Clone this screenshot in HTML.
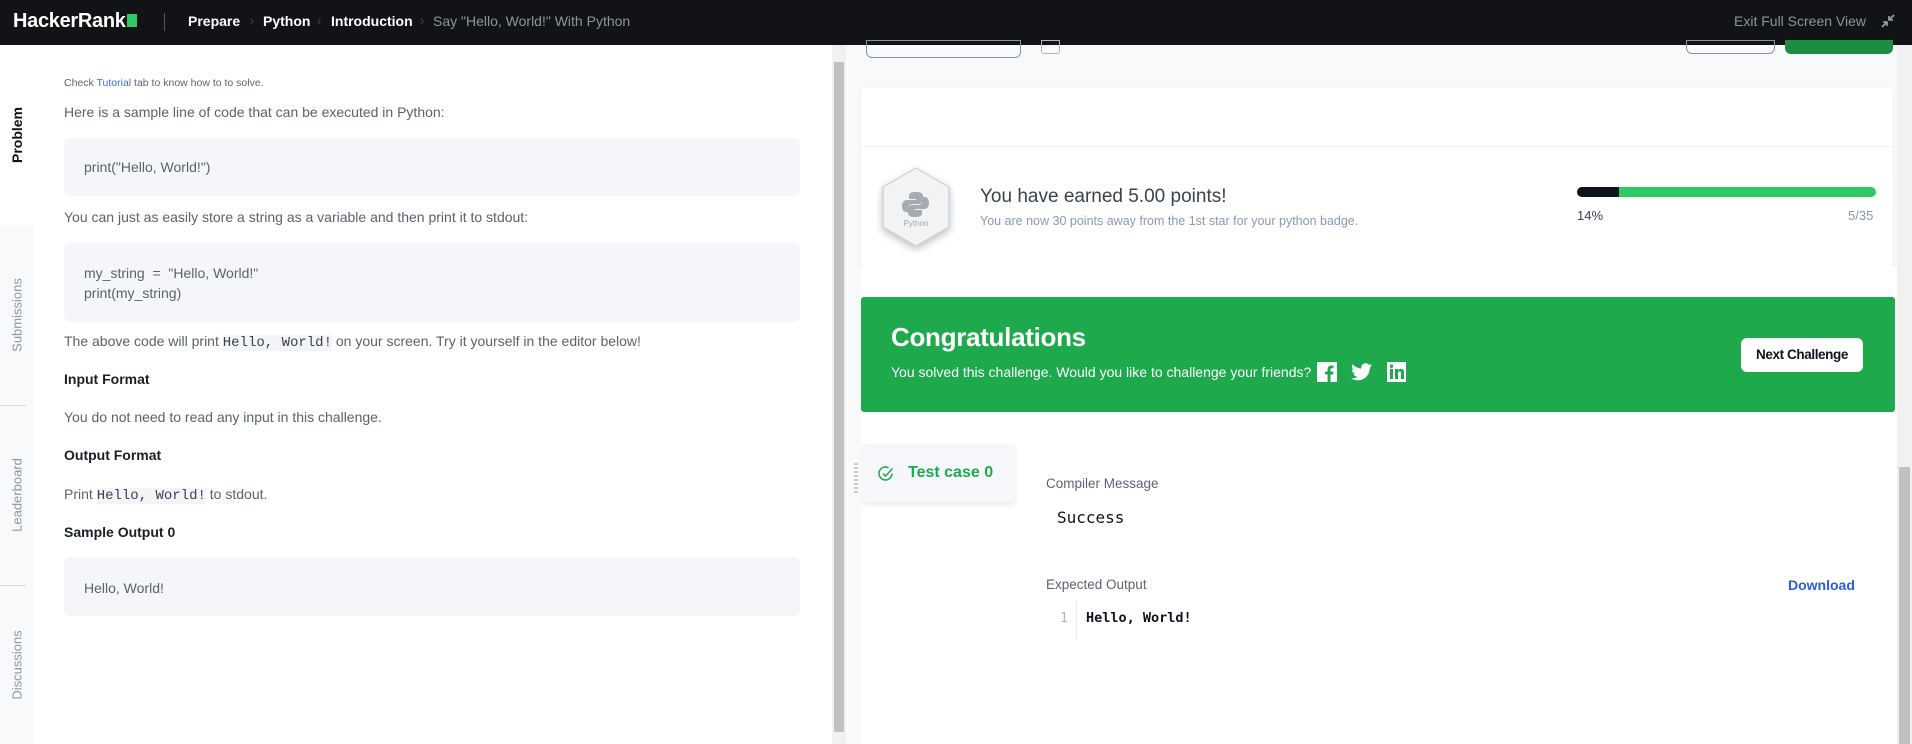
<!DOCTYPE html>
<html><head><meta charset="utf-8"><style>
*{box-sizing:border-box;margin:0;padding:0}
body{width:1912px;height:744px;overflow:hidden;background:#fff;font-family:"Liberation Sans",sans-serif;position:relative;color:#39424e}
.a{position:absolute;white-space:nowrap}
.hdr{left:0;top:0;width:1912px;height:45px;background:#111317}
.side{left:0;top:45px;width:34px;height:699px;background:#f8f9fb}
.tab{position:absolute;left:0;width:34px;}
.vt{position:absolute;left:50%;top:50%;transform:translate(-50%,-50%) rotate(-90deg);font-size:13px;color:#8a96a3;white-space:nowrap}
.box{position:absolute;left:64px;width:736px;background:#f5f6fa;border-radius:6px}
.p{font-size:14px;color:#5a626c}
.h{font-size:14px;font-weight:bold;color:#1a1f27}
code{font-family:"Liberation Mono",monospace;background:#f3f4f8;font-size:14px;color:#39424e}
</style></head><body>
<div class="a hdr"></div>
<div class="a" style="left:13px;top:10px;font-size:20px;font-weight:bold;color:#fff;letter-spacing:-0.3px">HackerRank<span style="display:inline-block;width:10px;height:13px;background:#2ec866;margin-left:1px"></span></div>
<div class="a" style="left:164px;top:13px;width:1px;height:18px;background:#555"></div>
<div class="a" style="left:188px;top:13px;font-size:14px;color:#fff;font-weight:bold">Prepare</div>
<div class="a" style="left:250px;top:13px;font-size:13px;color:#444">›</div>
<div class="a" style="left:263px;top:13px;font-size:14px;color:#fff;font-weight:bold">Python</div>
<div class="a" style="left:317px;top:13px;font-size:13px;color:#444">›</div>
<div class="a" style="left:331px;top:13px;font-size:14px;color:#fff;font-weight:bold">Introduction</div>
<div class="a" style="left:420px;top:13px;font-size:13px;color:#444">›</div>
<div class="a" style="left:433px;top:13px;font-size:14px;color:#8d959c">Say "Hello, World!" With Python</div>
<div class="a" style="left:1734px;top:13px;font-size:14px;color:#8d959c">Exit Full Screen View</div>
<svg class="a" style="left:1880px;top:13px" width="16" height="16" viewBox="0 0 16 16" fill="none" stroke="#9aa3ac" stroke-width="1.6"><path d="M14 2L9 7M9 3v4h4M2 14l5-5M3 9h4v4"/></svg>

<div class="a side"></div>
<div class="tab" style="top:45px;height:180px;background:#fff"><div class="vt" style="color:#0e141e;font-weight:bold;font-size:14px">Problem</div></div>
<div class="tab" style="top:225px;height:180px"><div class="vt">Submissions</div></div>
<div class="a" style="left:0;top:405px;width:26px;height:1px;background:#d5d9de"></div>
<div class="tab" style="top:405px;height:180px"><div class="vt">Leaderboard</div></div>
<div class="a" style="left:0;top:585px;width:26px;height:1px;background:#d5d9de"></div>
<div class="tab" style="top:585px;height:159px"><div class="vt">Discussions</div></div>

<div class="a" style="left:64px;top:77px;font-size:10.5px;color:#5b6470">Check <span style="color:#3b6fd1">Tutorial</span> tab to know how to to solve.</div>
<div class="a p" style="left:64px;top:104px">Here is a sample line of code that can be executed in Python:</div>
<div class="box" style="top:138px;height:58px"></div>
<div class="a p" style="left:84px;top:159px">print("Hello, World!")</div>
<div class="a p" style="left:64px;top:209px">You can just as easily store a string as a variable and then print it to stdout:</div>
<div class="box" style="top:243px;height:79px"></div>
<div class="a p" style="left:84px;top:265px">my_string &nbsp;= &nbsp;"Hello, World!"</div>
<div class="a p" style="left:84px;top:285px">print(my_string)</div>
<div class="a p" style="left:64px;top:333px">The above code will print <code>Hello, World!</code> on your screen. Try it yourself in the editor below!</div>
<div class="a h" style="left:64px;top:371px">Input Format</div>
<div class="a p" style="left:64px;top:409px">You do not need to read any input in this challenge.</div>
<div class="a h" style="left:64px;top:447px">Output Format</div>
<div class="a p" style="left:64px;top:486px">Print <code>Hello, World!</code> to stdout.</div>
<div class="a h" style="left:64px;top:524px">Sample Output 0</div>
<div class="box" style="top:557px;height:59px"></div>
<div class="a p" style="left:84px;top:580px">Hello, World!</div>

<div class="a" style="left:832px;top:45px;width:14px;height:699px;background:#f1f1f1"></div>
<div class="a" style="left:834px;top:62px;width:10px;height:670px;background:#c1c1c1"></div>

<div class="a" style="left:846px;top:45px;width:1051px;height:699px;background:#f8f9fb"></div>
<div class="a" style="left:866px;top:40px;width:155px;height:18px;border:1px solid #8a929b;border-radius:0 0 6px 6px"></div>
<div class="a" style="left:1041px;top:40px;width:19px;height:14px;border:1px solid #b0b6bd;border-radius:0 0 3px 3px"></div>
<div class="a" style="left:1686px;top:40px;width:89px;height:14px;border:1px solid #8a929b;border-radius:0 0 6px 6px"></div>
<div class="a" style="left:1785px;top:40px;width:108px;height:14px;background:#1e8d42;border-radius:0 0 6px 6px"></div>

<div class="a" style="left:861px;top:88px;width:1032px;height:178px;background:#fff;border-radius:4px;box-shadow:0 1px 3px rgba(0,0,0,.08)"></div>
<div class="a" style="left:861px;top:146px;width:1032px;height:1px;background:#f0f1f3"></div>
<svg class="a" style="left:870px;top:160px" width="92" height="96" viewBox="0 0 92 96"><defs><filter id="s"><feDropShadow dx="0" dy="3" stdDeviation="4" flood-opacity=".25"/></filter></defs><polygon points="46,8 79,27 79,67 46,86 13,67 13,27" fill="#f1f3f5" stroke="#c5c9ce" stroke-width="1" filter="url(#s)"/><path d="M45 32c-5 0-6 2-6 4v3h7v1h-9c-3 0-5 2-5 6s2 6 4 6h2v-3c0-3 2-5 5-5h6c2 0 4-2 4-4v-4c0-2-2-4-5-4z M46 57c5 0 6-2 6-4v-3h-7v-1h9c3 0 5-2 5-6s-2-6-4-6h-2v3c0 3-2 5-5 5h-6c-2 0-4 2-4 4v4c0 2 2 4 5 4z" fill="#a4abb3"/><text x="46" y="66" font-size="8" fill="#a4abb3" text-anchor="middle" font-family="Liberation Sans">Python</text></svg>
<div class="a" style="left:980px;top:186px;font-size:19px;color:#39424e">You have earned 5.00 points!</div>
<div class="a" style="left:980px;top:214px;font-size:12.5px;color:#8a9bb0">You are now 30 points away from the 1st star for your python badge.</div>
<div class="a" style="left:1577px;top:187px;width:299px;height:10px;border-radius:5px;background:#2ec866;overflow:hidden"><div style="width:42px;height:10px;background:#0e141e"></div></div>
<div class="a" style="left:1577px;top:208px;font-size:13px;color:#39424e">14%</div>
<div class="a" style="left:1848px;top:208px;font-size:13px;color:#8a96a3">5/35</div>

<div class="a" style="left:861px;top:266px;width:1036px;height:478px;background:#fff"></div>
<div class="a" style="left:861px;top:297px;width:1034px;height:115px;background:#1ea94d;border-radius:3px"></div>
<div class="a" style="left:891px;top:322px;font-size:26px;font-weight:bold;color:#fff;letter-spacing:-0.3px">Congratulations</div>
<div class="a" style="left:891px;top:364px;font-size:14px;color:#fff">You solved this challenge. Would you like to challenge your friends?</div>
<svg class="a" style="left:1317px;top:362px" width="20" height="20" viewBox="0 0 20 20"><rect width="20" height="20" fill="#fff"/><path d="M13.5 20v-7.5h2.5l.4-3h-2.9V7.7c0-.9.3-1.4 1.5-1.4h1.5V3.6c-.3 0-1.2-.1-2.2-.1-2.2 0-3.7 1.3-3.700 3.8v2.2H8.1v3h2.5V20z" fill="#1ea94d"/></svg>
<svg class="a" style="left:1351px;top:363px" width="21" height="18" viewBox="0 0 24 20"><path d="M24 2.4c-.9.4-1.8.6-2.8.8 1-.6 1.8-1.6 2.2-2.7-1 .6-2 1-3.1 1.2C19.3.7 18 0 16.6 0c-2.7 0-4.9 2.2-4.9 4.900 0 .4 0 .8.1 1.1C7.7 5.8 4.1 3.9 1.7.9c-.4.7-.7 1.6-.7 2.5 0 1.7.9 3.2 2.2 4.1-.8 0-1.6-.2-2.2-.6v.1c0 2.4 1.7 4.4 3.9 4.8-.4.1-.8.2-1.3.2-.3 0-.6 0-.9-.1.6 2 2.4 3.4 4.6 3.4-1.7 1.3-3.8 2.1-6.1 2.1-.4 0-.8 0-1.2-.1 2.2 1.4 4.8 2.2 7.5 2.2 9.1 0 14-7.5 14-14v-.6c1-.7 1.8-1.6 2.5-2.5z" fill="#fff"/></svg>
<svg class="a" style="left:1387px;top:362px" width="19" height="20" viewBox="0 0 19 20"><rect width="19" height="20" fill="#fff"/><rect x="3" y="7" width="3" height="10" fill="#1ea94d"/><circle cx="4.5" cy="4.2" r="1.7" fill="#1ea94d"/><path d="M8 7h3v1.5c.6-1 1.6-1.7 3-1.7 2.3 0 3 1.5 3 3.8V17h-3v-5.6c0-1.2-.3-2-1.4-2-1.2 0-1.6.9-1.600 2V17H8z" fill="#1ea94d"/></svg>
<div class="a" style="left:1741px;top:338px;width:122px;height:34px;background:#fff;border-radius:6px;font-size:13.5px;font-weight:bold;color:#0e141e;text-align:center;line-height:34px;letter-spacing:-0.4px">Next Challenge</div>

<div class="a" style="left:854px;top:463px;width:4px;height:30px;background:repeating-linear-gradient(#c9cdd2 0 2px,transparent 2px 4px)"></div>
<div class="a" style="left:863px;top:444px;width:152px;height:58px;background:#f5f7fa;box-shadow:0 3px 5px rgba(0,0,0,.08)"></div>
<svg class="a" style="left:877px;top:465px" width="18" height="18" viewBox="0 0 18 18" fill="none" stroke="#1ea94d" stroke-width="1.5"><path d="M15 8.5a6.5 6.5 0 1 1-3.5-5.8"/><path d="M6 8.5l2.5 2.5L15.5 3.5"/></svg>
<div class="a" style="left:908px;top:464px;font-size:16px;font-weight:bold;color:#1ea94d">Test case 0</div>
<div class="a" style="left:1046px;top:476px;font-size:13.5px;color:#5b6470">Compiler Message</div>
<div class="a" style="left:1057px;top:508px;font-size:16px;font-family:'DejaVu Sans Mono',monospace;color:#0e141e">Success</div>
<div class="a" style="left:1046px;top:577px;font-size:13.5px;color:#5b6470">Expected Output</div>
<div class="a" style="left:1788px;top:577px;font-size:14px;font-weight:bold;color:#2a5ed8">Download</div>
<div class="a" style="left:1060px;top:611px;font-size:13px;color:#b0b6bd;font-family:'DejaVu Sans Mono',monospace">1</div>
<div class="a" style="left:1076px;top:600px;width:1px;height:40px;background:#e8eaed"></div>
<div class="a" style="left:1086px;top:610px;font-size:13.5px;font-weight:bold;color:#0e141e;font-family:'DejaVu Sans Mono',monospace">Hello, World!</div>

<div class="a" style="left:1897px;top:45px;width:15px;height:699px;background:#f1f1f1"></div>
<div class="a" style="left:1899px;top:467px;width:11px;height:277px;background:#c1c1c1"></div>
</body></html>
